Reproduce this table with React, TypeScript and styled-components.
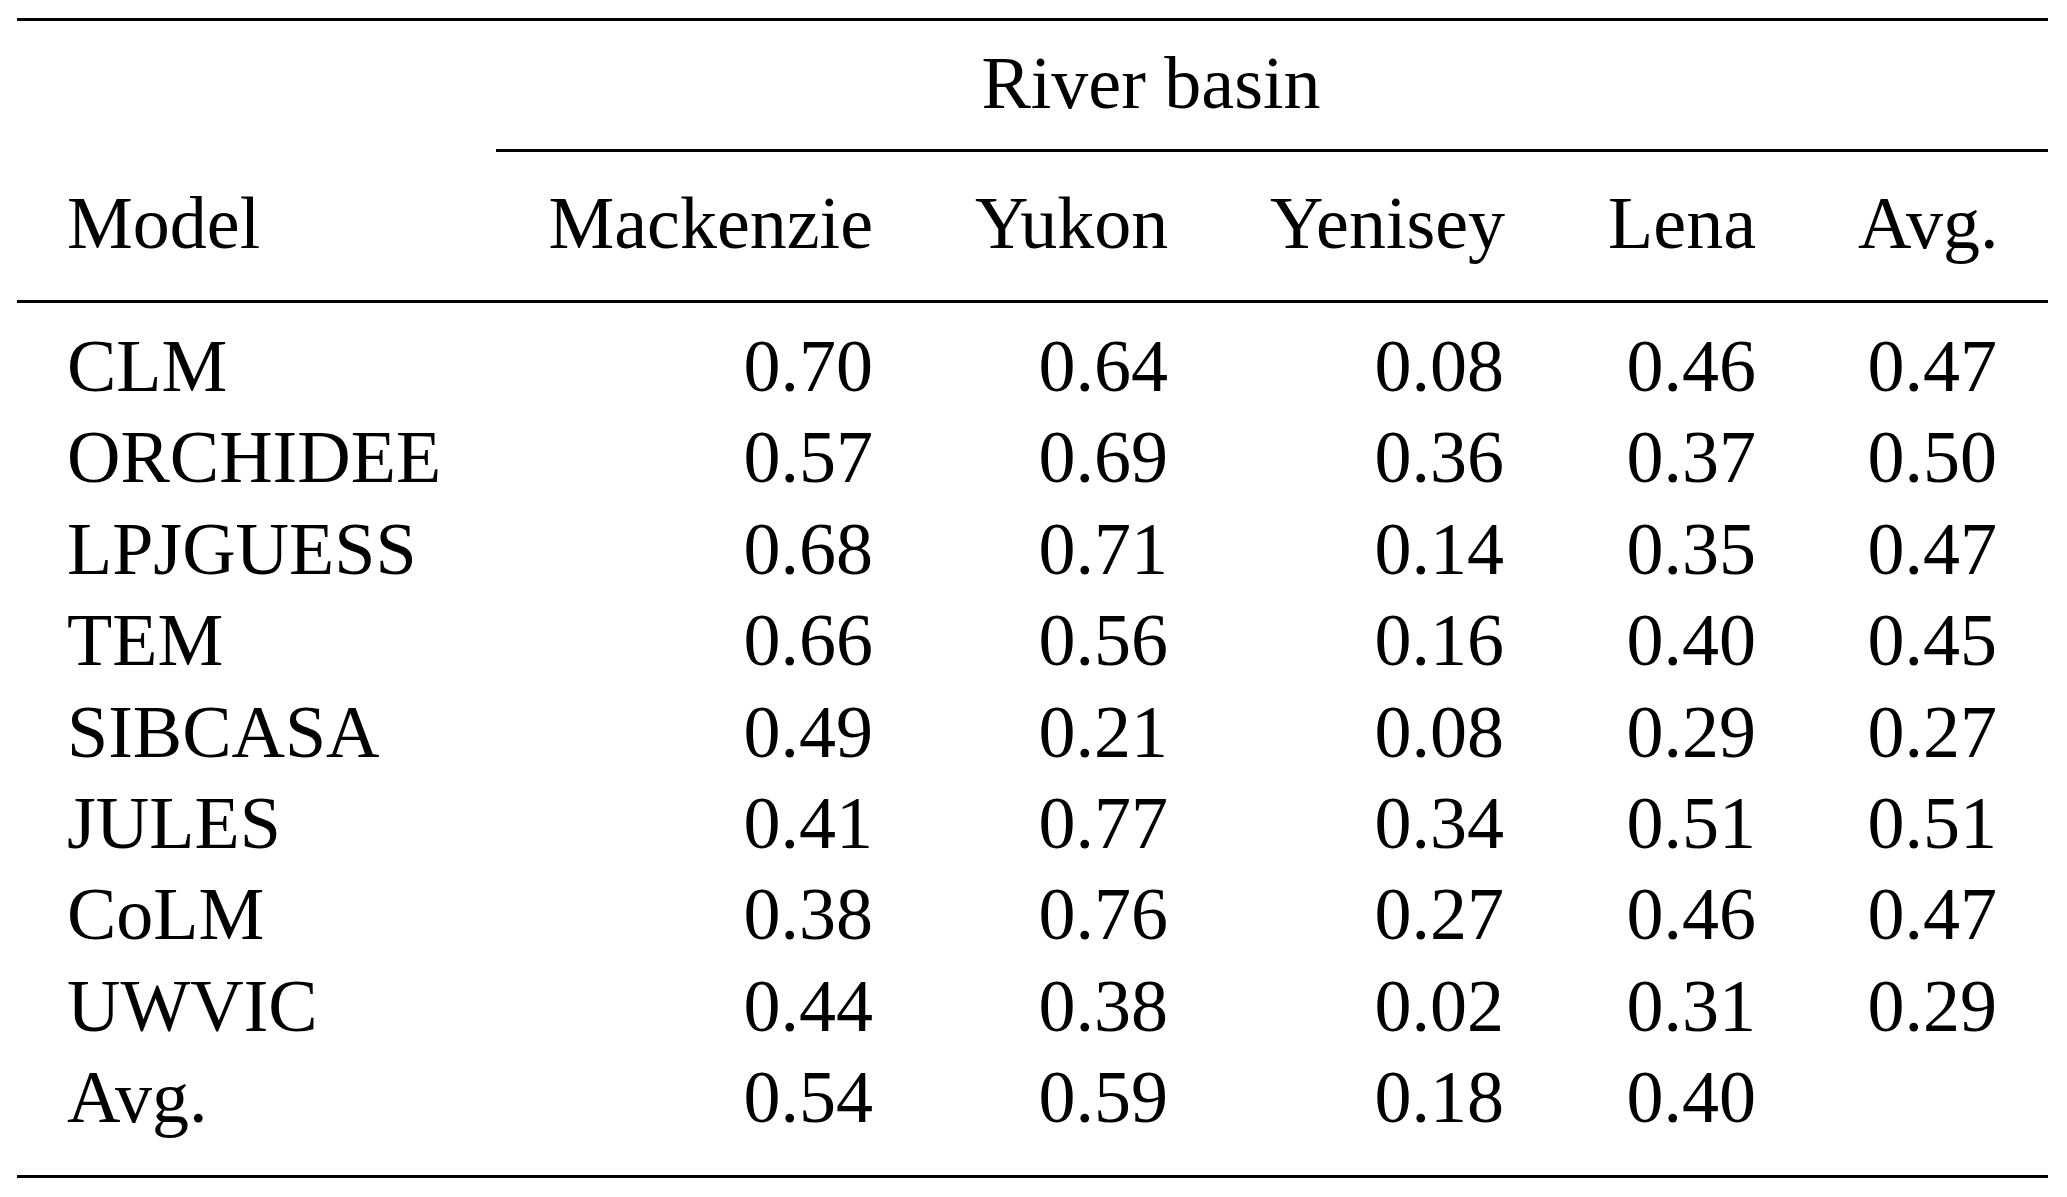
import React from "react";
import styled, { createGlobalStyle } from "styled-components";

const GlobalStyle = createGlobalStyle`
  html, body {
    margin: 0;
    padding: 0;
    background: #ffffff;
  }
  body {
    font-family: "Liberation Serif", "Times New Roman", serif;
    color: #000000;
  }
`;

const COLS = "478px 429px 295px 336px 252px 241px";

const Page = styled.div`
  padding: 18px 0 0 17px;
  width: 2031px;
`;

const Table = styled.div`
  display: flex;
  flex-direction: column;
  width: 2031px;
  font-family: "Liberation Serif", "Times New Roman", serif;
  font-size: 74px;
  color: #000;
`;

const Rule = styled.div<{ $indent?: number }>`
  height: 3px;
  background: #000;
  margin-left: ${(p) => p.$indent ?? 0}px;
`;

const Row = styled.div<{ $lh: number; $pb?: number }>`
  display: grid;
  grid-template-columns: ${COLS};
  line-height: ${(p) => p.$lh}px;
  padding-bottom: ${(p) => p.$pb ?? 0}px;
`;

const Cell = styled.div<{ $first?: boolean }>`
  white-space: nowrap;
  text-align: ${(p) => (p.$first ? "left" : "right")};
  padding: ${(p) => (p.$first ? "0 0 0 50px" : "0 51px")};
`;

const SpanCell = styled.div`
  grid-column: 2 / 6;
  text-align: center;
  white-space: nowrap;
`;

const Body = styled.div`
  display: flex;
  flex-direction: column;
  padding: 18px 0 31px;
`;

const headers = ["Mackenzie", "Yukon", "Yenisey", "Lena", "Avg."];

const rows: [string, string[]][] = [
  ["CLM", ["0.70", "0.64", "0.08", "0.46", "0.47"]],
  ["ORCHIDEE", ["0.57", "0.69", "0.36", "0.37", "0.50"]],
  ["LPJGUESS", ["0.68", "0.71", "0.14", "0.35", "0.47"]],
  ["TEM", ["0.66", "0.56", "0.16", "0.40", "0.45"]],
  ["SIBCASA", ["0.49", "0.21", "0.08", "0.29", "0.27"]],
  ["JULES", ["0.41", "0.77", "0.34", "0.51", "0.51"]],
  ["CoLM", ["0.38", "0.76", "0.27", "0.46", "0.47"]],
  ["UWVIC", ["0.44", "0.38", "0.02", "0.31", "0.29"]],
  ["Avg.", ["0.54", "0.59", "0.18", "0.40", ""]],
];

export default function App() {
  return (
    <Page>
      <GlobalStyle />
      <Table>
        <Rule />
        <Row $lh={124} $pb={4}>
          <Cell $first />
          <SpanCell>River basin</SpanCell>
        </Row>
        <Rule $indent={479} />
        <Row $lh={142} $pb={6}>
          <Cell $first>Model</Cell>
          {headers.map((h) => (
            <Cell key={h}>{h}</Cell>
          ))}
        </Row>
        <Rule />
        <Body>
          {rows.map(([name, vals]) => (
            <Row key={name} $lh={91.4}>
              <Cell $first>{name}</Cell>
              {vals.map((v, i) => (
                <Cell key={i}>{v}</Cell>
              ))}
            </Row>
          ))}
        </Body>
        <Rule />
      </Table>
    </Page>
  );
}
